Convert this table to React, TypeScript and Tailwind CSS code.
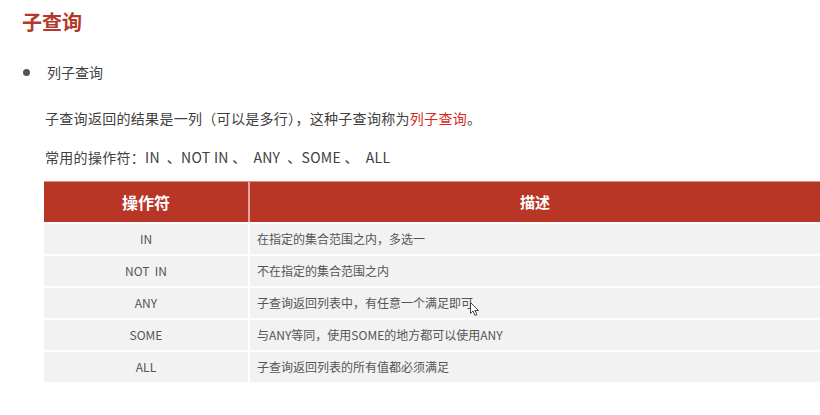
import React from 'react'

const rows = [
  { op: 'IN', desc: '在指定的集合范围之内，多选一' },
  { op: 'NOT  IN', desc: '不在指定的集合范围之内' },
  { op: 'ANY', desc: '子查询返回列表中，有任意一个满足即可' },
  { op: 'SOME', desc: '与ANY等同，使用SOME的地方都可以使用ANY' },
  { op: 'ALL', desc: '子查询返回列表的所有值都必须满足' },
]

const font = { fontFamily: '"Noto Sans CJK SC", "Noto Sans", sans-serif' }

const App: React.FC = () => {
  return (
    <div className="relative w-[820px] h-[415px] bg-white overflow-hidden" style={font}>
      <h1 className="ml-[22px] pt-[8px] text-[20px] leading-[28px] font-bold text-[#b5372a]">
        子查询
      </h1>

      <div className="mt-[26px] flex items-center h-[20px]">
        <span className="ml-[23px] w-[7px] h-[7px] rounded-full bg-[#555555]"></span>
        <span className="ml-[17px] text-[14px] text-[#404040]">列子查询</span>
      </div>

      <p className="mt-[26px] ml-[45px] text-[14px] leading-[20px] tracking-[0.3px] text-[#404040]">
        子查询返回的结果是一列（可以是多行），这种子查询称为<span className="text-[#d6281c]">列子查询</span>。
      </p>

      <p className="mt-[19px] ml-[45px] text-[14px] leading-[20px] tracking-[0.3px] text-[#404040] whitespace-pre">
        常用的操作符：IN  、NOT IN 、  ANY  、SOME 、  ALL
      </p>

      <div className="mt-[14px] ml-[44px] w-[776px] flex flex-col">
        <div className="flex h-[41px] bg-[#b83626] border-t border-[#e08a80] text-white font-bold">
          <div className="w-[206px] flex items-center justify-center text-[16px] border-r-2 border-[#e8a39a]">
            操作符
          </div>
          <div className="flex-1 flex items-center justify-center text-[15px]">描述</div>
        </div>
        {rows.map((r) => (
          <div key={r.op} className="flex h-[32px] border-t-2 border-white bg-[#f2f2f2] text-[12px] text-[#555555]">
            <div className="w-[206px] flex items-center justify-center border-r-2 border-white whitespace-pre">
              {r.op}
            </div>
            <div className="flex-1 flex items-center pl-[7px]">{r.desc}</div>
          </div>
        ))}
      </div>

      <svg
        className="absolute left-[470px] top-[302px]"
        width="10"
        height="15"
        viewBox="0 0 10 15"
      >
        <path
          d="M0.5 0.5 L0.5 11.5 L3 9 L5 13.5 L7 12.5 L5 8.5 L8.5 8.5 Z"
          fill="white"
          stroke="#444"
          strokeWidth="1"
          strokeLinejoin="round"
        />
      </svg>
    </div>
  )
}

export default App
